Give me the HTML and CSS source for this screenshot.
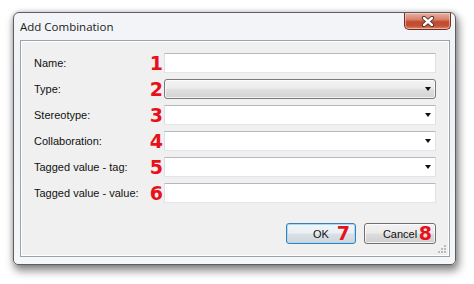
FILE: index.html
```html
<!DOCTYPE html>
<html>
<head>
<meta charset="utf-8">
<link rel="stylesheet" href="styles.css">
</head>
<body>
<div class="window">
  <div class="titlebar">
    <span class="title">Add Combination</span>
    <div class="close">
      <svg width="14" height="11" viewBox="0 0 14 11">
        <path d="M3 2 L11 9 M11 2 L3 9" stroke="#4a2a24" stroke-width="4.2" stroke-linecap="round"/>
        <path d="M3 2 L11 9 M11 2 L3 9" stroke="#ffffff" stroke-width="2.4" stroke-linecap="round"/>
      </svg>
    </div>
  </div>
  <div class="client">
    <div class="form">
      <span class="label">Name:</span><span class="num">1</span><div class="field text"></div>
      <span class="label">Type:</span><span class="num">2</span><div class="field combo disabled"><span class="arrow"></span></div>
      <span class="label">Stereotype:</span><span class="num">3</span><div class="field combo"><span class="arrow"></span></div>
      <span class="label">Collaboration:</span><span class="num">4</span><div class="field combo"><span class="arrow"></span></div>
      <span class="label">Tagged value - tag:</span><span class="num">5</span><div class="field combo"><span class="arrow"></span></div>
      <span class="label">Tagged value - value:</span><span class="num">6</span><div class="field text"></div>
    </div>
    <div class="buttons">
      <div class="btn default ok">OK<span class="bnum">7</span></div>
      <div class="btn cancel">Cancel<span class="bnum">8</span></div>
    </div>
    <svg class="grip" width="9" height="9" viewBox="0 0 9 9">
      <g fill="#b9bcc0">
        <rect x="6" y="0" width="2" height="2"/>
        <rect x="3" y="3" width="2" height="2"/><rect x="6" y="3" width="2" height="2"/>
        <rect x="0" y="6" width="2" height="2"/><rect x="3" y="6" width="2" height="2"/><rect x="6" y="6" width="2" height="2"/>
      </g>
    </svg>
  </div>
</div>
</body>
</html>
```
FILE: styles.css
```css
html, body {
  margin: 0;
  padding: 0;
  background: #ffffff;
}
body {
  width: 474px;
  height: 284px;
  overflow: hidden;
  padding-top: 12px;
  box-sizing: border-box;
}
.window {
  margin-left: 13px;
  width: 443px;
  height: 253px;
  box-sizing: border-box;
  border: 1px solid #5b5f64;
  border-radius: 6px 6px 5px 5px;
  background: linear-gradient(180deg, #f3f5f8 0%, #eef1f5 30%, #f4f6f8 100%);
  box-shadow: 2px 5px 9px 1px rgba(0,0,0,0.45), 0 0 5px rgba(0,0,0,0.2);
  display: flex;
  flex-direction: column;
}
.titlebar {
  height: 27px;
  display: flex;
  justify-content: space-between;
  align-items: center;
  padding-left: 6px;
}
.title {
  font-family: "Open Sans", "Noto Sans", sans-serif;
  font-size: 11.5px;
  color: #1b1b1b;
  margin-top: -1px;
}
.close {
  align-self: flex-start;
  margin-right: 4px;
  width: 47px;
  height: 17px;
  box-sizing: border-box;
  border: 1px solid #6e2e22;
  border-top: none;
  border-radius: 0 0 5px 5px;
  background: linear-gradient(180deg, #e9b2a4 0%, #d8826c 40%, #c24a30 55%, #c64e33 80%, #dd8a6a 100%);
  box-shadow: inset 0 0 0 1px rgba(255,220,210,0.55);
  display: flex;
  align-items: center;
  justify-content: center;
}
.client {
  position: relative;
  margin: 0 5px 7px 6px;
  flex: 1;
  border: 1px solid #9aa2ab;
  background: #f0f0f0;
  box-shadow: inset 0 0 0 1px #ffffff;
  display: flex;
  flex-direction: column;
}
.form {
  display: grid;
  grid-template-columns: 1fr auto 272px;
  grid-auto-rows: 20px;
  row-gap: 6px;
  padding: 12px 13px 0 13px;
  align-items: center;
}
.label {
  font-family: "Liberation Sans", Arial, sans-serif;
  font-size: 11px;
  color: #111;
}
.num {
  font-family: "DejaVu Sans", sans-serif;
  font-weight: bold;
  font-size: 19px;
  color: #e8101a;
  padding-right: 1px;
  line-height: 20px;
}
.field {
  height: 20px;
  box-sizing: border-box;
  background: #fff;
  border: 1px solid #e2e6eb;
  border-top-color: #b5b9bf;
  border-left-color: #dde1e6;
  border-right-color: #dde1e6;
  position: relative;
}
.field.combo.disabled {
  border: 1px solid #7a7a7a;
  border-radius: 3px;
  background: linear-gradient(180deg, #f4f4f4 0%, #ececec 45%, #dedede 55%, #d3d3d3 100%);
  box-shadow: inset 0 0 0 1px rgba(255,255,255,0.7);
}
.arrow {
  position: absolute;
  right: 4px;
  top: 7px;
  width: 0;
  height: 0;
  border-left: 3.5px solid transparent;
  border-right: 3.5px solid transparent;
  border-top: 4px solid #111;
}
.buttons {
  margin-top: auto;
  display: flex;
  justify-content: flex-end;
  gap: 8px;
  padding: 0 13px 12px 13px;
}
.btn {
  position: relative;
  height: 21px;
  box-sizing: border-box;
  border: 1px solid #707070;
  border-radius: 3px;
  background: linear-gradient(180deg, #f2f2f2 0%, #ebebeb 48%, #dddddd 52%, #cfcfcf 100%);
  box-shadow: inset 0 0 0 1px rgba(255,255,255,0.75);
  font-family: "Liberation Sans", Arial, sans-serif;
  font-size: 11px;
  color: #111;
  display: flex;
  align-items: center;
  justify-content: center;
}
.btn.ok { width: 70px; }
.btn.cancel { width: 72px; }
.btn.default {
  border-color: #3c7fb1;
  box-shadow: inset 0 0 0 1px #a6dcf6;
  background: linear-gradient(180deg, #f1f6f9 0%, #e9eff3 48%, #d9e1e6 52%, #cdd6dc 100%);
}
.bnum {
  position: absolute;
  right: 3px;
  top: -1px;
  font-family: "DejaVu Sans", sans-serif;
  font-weight: bold;
  font-size: 19px;
  line-height: 21px;
  color: #e8101a;
}
.btn.ok .bnum { right: 5px; }
.grip {
  position: absolute;
  right: 2px;
  bottom: 2px;
}
```
